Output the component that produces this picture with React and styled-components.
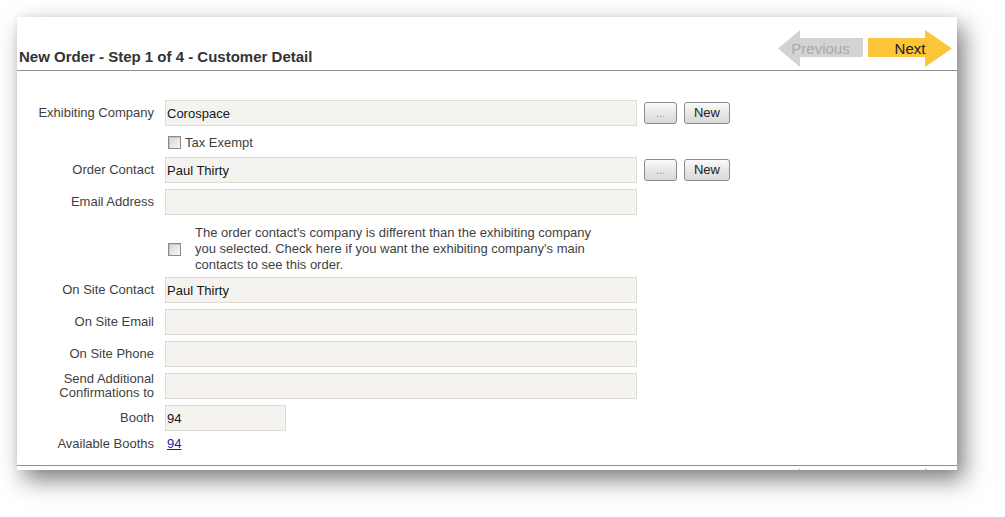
import React from "react";
import styled, { createGlobalStyle } from "styled-components";

const GlobalStyle = createGlobalStyle`
  html, body { margin: 0; padding: 0; background: #ffffff; }
  body { font-family: "Liberation Sans", Arial, sans-serif; }
`;

const Page = styled.div`
  padding: 17px 0 60px 17px;
`;

const Panel = styled.div`
  width: 940px;
  background: #ffffff;
  box-shadow: 7px 10px 22px rgba(0, 0, 0, 0.5), 0 0 6px rgba(0, 0, 0, 0.06);
  overflow: hidden;
`;

const Header = styled.div`
  box-sizing: border-box;
  height: 54px;
  display: flex;
  justify-content: space-between;
  align-items: flex-end;
  padding: 0 5px 0 2px;
  border-bottom: 1px solid #8e8e8e;
`;

const Title = styled.h1`
  margin: 0 0 4px;
  font-size: 15px;
  line-height: 18px;
  font-weight: bold;
  color: #333333;
`;

const Nav = styled.div`
  display: flex;
  gap: 5px;
  margin-bottom: ${(p) => p.$bottom || 0}px;
`;

const prevShape = "polygon(0 18.5px, 22px 0, 22px 8px, 100% 8px, 100% 27px, 22px 27px, 22px 100%)";
const nextShape = "polygon(0 8px, 57px 8px, 57px 0, 100% 18.5px, 57px 100%, 57px 27px, 0 27px)";

const Arrow = styled.div`
  width: ${(p) => (p.$dir === "left" ? 85 : 84)}px;
  height: 37px;
  flex: none;
  background: ${(p) => p.$bg};
  color: ${(p) => p.$fg};
  clip-path: ${(p) => (p.$dir === "left" ? prevShape : nextShape)};
  font-size: 15px;
  line-height: 37px;
  text-align: center;
  user-select: none;
`;

const Form = styled.div`
  display: grid;
  grid-template-columns: 137px 1fr;
  column-gap: 11px;
  row-gap: 6px;
  align-items: center;
  padding: 29px 0 14px;
`;

const Label = styled.div`
  text-align: right;
  font-size: 13px;
  line-height: 14px;
  color: #3f3f3f;
  margin: ${(p) => (p.$tall ? "-1px 0" : "0")};
`;

const Field = styled.div`
  display: flex;
  align-items: center;
  gap: 7px;
`;

const TextInput = styled.input`
  box-sizing: border-box;
  width: ${(p) => p.$w || 472}px;
  height: 26px;
  margin: 0;
  padding: 0 1px;
  border: 1px solid #dedbd3;
  background: #f4f3ef;
  font-family: "Liberation Sans", Arial, sans-serif;
  font-size: 13px;
  color: #151515;
  outline: none;
`;

const SmallButton = styled.button`
  box-sizing: border-box;
  width: ${(p) => p.$w}px;
  height: 22px;
  margin: 0;
  padding: 0;
  border: 1px solid #8b8b8b;
  border-radius: 3px;
  background: linear-gradient(#fbfbfb, #e6e6e6 55%, #d9d9d9);
  font-family: "Liberation Sans", Arial, sans-serif;
  font-size: ${(p) => (p.$muted ? 11 : 13)}px;
  color: ${(p) => (p.$muted ? "#9a9a9a" : "#222222")};
  line-height: 20px;
`;

const CheckRow = styled.label`
  box-sizing: border-box;
  grid-column: 2;
  display: flex;
  align-items: center;
  gap: ${(p) => p.$gap}px;
  height: ${(p) => p.$h}px;
  padding: ${(p) => p.$pt}px 0 0 3px;
  font-size: 13px;
  color: #3f3f3f;
`;

const Box = styled.input.attrs({ type: "checkbox" })`
  appearance: none;
  -webkit-appearance: none;
  box-sizing: border-box;
  width: 13px;
  height: 13px;
  margin: 0;
  flex: none;
  border: 1px solid #8a8a8a;
  background: linear-gradient(135deg, #d6d6d6, #f7f7f7);
  box-shadow: inset 1px 1px 0 #c4c4c4;
`;

const Notice = styled.span`
  font-size: 13px;
  line-height: 16px;
  color: #3f3f3f;
  white-space: nowrap;
`;

const BoothLink = styled.a`
  font-size: 13px;
  line-height: 14px;
  color: #1c1ca6;
  text-decoration: underline;
  padding-left: 2px;
`;

const Footer = styled.div`
  box-sizing: border-box;
  height: 5px;
  border-top: 1px solid #8e8e8e;
  display: flex;
  justify-content: flex-end;
  padding: 2px 5px 0 0;
  overflow: hidden;
`;

function NavArrows({ bottom, labels = true }) {
  return (
    <Nav $bottom={bottom} aria-hidden={!labels}>
      <Arrow $dir="left" $bg="#d3d3d3" $fg="#a9a9a9">{labels ? "Previous" : null}</Arrow>
      <Arrow $dir="right" $bg="#fcc53a" $fg="#222222">{labels ? "Next" : null}</Arrow>
    </Nav>
  );
}

function InputRow({ label, value, width, lookup, tall }) {
  return (
    <>
      <Label $tall={tall}>{label}</Label>
      <Field>
        <TextInput $w={width} defaultValue={value} readOnly />
        {lookup && (
          <>
            <SmallButton $w={33} $muted>...</SmallButton>
            <SmallButton $w={46}>New</SmallButton>
          </>
        )}
      </Field>
    </>
  );
}

export default function App() {
  return (
    <>
      <GlobalStyle />
      <Page>
        <Panel>
          <Header>
            <Title>New Order - Step 1 of 4 - Customer Detail</Title>
            <NavArrows bottom={3} />
          </Header>
          <Form>
            <InputRow label="Exhibiting Company" value="Corospace" lookup />
            <CheckRow $gap={4} $h={19} $pt={2}>
              <Box />
              Tax Exempt
            </CheckRow>
            <InputRow label="Order Contact" value="Paul Thirty" lookup />
            <InputRow label="Email Address" value="" />
            <CheckRow $gap={14} $h={50} $pt={6}>
              <Box />
              <Notice>
                The order contact's company is different than the exhibiting company
                <br />
                you selected. Check here if you want the exhibiting company's main
                <br />
                contacts to see this order.
              </Notice>
            </CheckRow>
            <InputRow label="On Site Contact" value="Paul Thirty" />
            <InputRow label="On Site Email" value="" />
            <InputRow label="On Site Phone" value="" />
            <InputRow
              tall
              label={
                <>
                  Send Additional
                  <br />
                  Confirmations to
                </>
              }
              value=""
            />
            <InputRow label="Booth" value="94" width={121} />
            <Label>Available Booths</Label>
            <Field>
              <BoothLink href="#">94</BoothLink>
            </Field>
          </Form>
          <Footer>
            <NavArrows labels={false} />
          </Footer>
        </Panel>
      </Page>
    </>
  );
}
